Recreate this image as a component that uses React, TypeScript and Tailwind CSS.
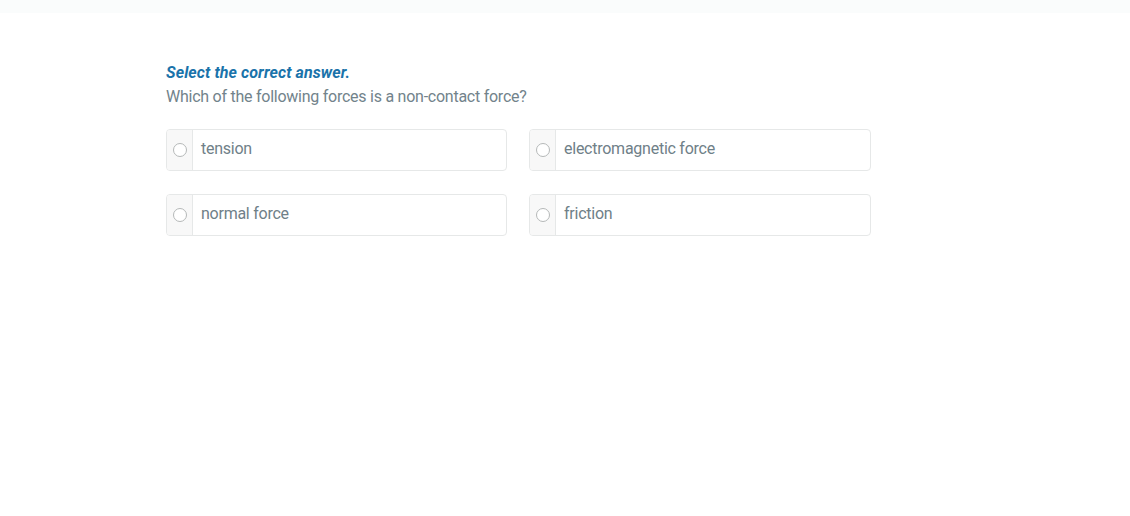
import React from "react";

const options = [
  ["tension", "electromagnetic force"],
  ["normal force", "friction"],
];

function Option({ label }: { label: string }) {
  return (
    <div className="flex h-[42px] rounded-[4px] border border-[#e6e8e8] bg-white overflow-hidden">
      <div className="w-[26px] shrink-0 flex items-center justify-center bg-[#f8f8f8] border-r border-[#e6e8e8]">
        <span className="block w-[14px] h-[14px] rounded-full border border-[#b5b8b8] bg-white" />
      </div>
      <div className="flex items-center pl-[8px] pb-[2px] text-[16px] tracking-[-0.25px] text-[#6f8088]">{label}</div>
    </div>
  );
}

export default function App() {
  return (
    <div className="w-[1130px] h-[516px] bg-white" style={{ fontFamily: "Roboto, 'Open Sans', sans-serif" }}>
      <div className="h-[13px] bg-[#fafcfc]" />
      <div className="pl-[166px] pt-[50px]">
        <div className="text-[16px] font-bold italic tracking-[0.1px] text-[#1a73aa] leading-[20px]">Select the correct answer.</div>
        <div className="text-[16px] tracking-[-0.25px] text-[#72838b] leading-[24px] mt-[2px]">Which of the following forces is a non-contact force?</div>
        <div className="mt-[20px] grid grid-cols-[341px_342px] gap-x-[22px] gap-y-[23px]">
          {options.flat().map((o) => (
            <Option key={o} label={o} />
          ))}
        </div>
      </div>
    </div>
  );
}
